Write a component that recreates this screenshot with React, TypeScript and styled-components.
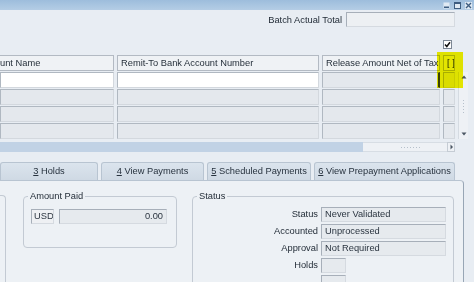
import styled, { createGlobalStyle } from "styled-components";

const GlobalStyle = createGlobalStyle`
  html, body {
    margin: 0;
    padding: 0;
  }
  body {
    width: 474px;
    height: 282px;
    overflow: hidden;
    background: #e8edf3;
    font-family: "Liberation Sans", Arial, sans-serif;
    font-size: 9.3px;
    color: #1e2833;
  }
`;

const Window = styled.div`
  position: relative;
  width: 474px;
  height: 282px;
  overflow: hidden;
  display: flex;
  flex-direction: column;
`;

const TitleBar = styled.div`
  height: 10px;
  flex: 0 0 10px;
  background: linear-gradient(#9dbddc, #b4cde5);
  display: flex;
  justify-content: flex-end;
  align-items: center;
  gap: 4px;
  padding-right: 2px;
`;

const WinButton = styled.svg`
  width: 7px;
  height: 7px;
  display: block;
`;

const BatchRow = styled.div`
  margin-top: 2px;
  height: 15px;
  flex: 0 0 15px;
  display: flex;
  justify-content: flex-end;
  align-items: center;
  gap: 4px;
  padding-right: 19px;
`;

const Field = styled.div<{ $w?: number; $align?: string; $bg?: string }>`
  box-sizing: border-box;
  width: ${(p) => (p.$w ? `${p.$w}px` : "100%")};
  height: 15px;
  line-height: 13px;
  padding: 0 3px;
  border: 1px solid;
  border-color: #a7afb9 #d5dae0 #d5dae0 #a7afb9;
  background: ${(p) => p.$bg || "#e6eaee"};
  text-align: ${(p) => p.$align || "left"};
  white-space: nowrap;
  overflow: hidden;
  color: #2b3540;
`;

const CheckRow = styled.div`
  margin-top: 13px;
  height: 8px;
  flex: 0 0 8px;
  display: flex;
  justify-content: flex-end;
  padding-right: 22px;
`;

const CheckBox = styled.div`
  box-sizing: border-box;
  width: 9px;
  height: 9px;
  border: 1px solid #7c8794;
  background: #fff;
  display: flex;
  align-items: center;
  justify-content: center;
`;

const Table = styled.div`
  margin-top: 7px;
  display: grid;
  grid-template-columns: 114px 202px 118px 12px 10px;
  grid-template-rows: 16px repeat(4, 16px);
  column-gap: 3px;
  row-gap: 1px;
`;

const HeaderCell = styled.div<{ $center?: boolean }>`
  box-sizing: border-box;
  background: #eff2f5;
  border: 1px solid #b3bac3;
  padding: 0 3px;
  line-height: 14px;
  white-space: nowrap;
  overflow: hidden;
  text-align: ${(p) => (p.$center ? "center" : "left")};
  color: #26303b;

  &:first-child {
    border-left: none;
    padding-left: 0;
  }
`;

const Cell = styled.div<{ $white?: boolean; $focus?: boolean }>`
  box-sizing: border-box;
  background: ${(p) => (p.$white ? "#ffffff" : "#e4e8ed")};
  border: 1px solid;
  border-color: #b0b8c1 #d3d8de #d3d8de #b0b8c1;
  ${(p) => (p.$focus ? "border-right: 2px solid #3c434b;" : "")}
`;

const VScroll = styled.div`
  grid-column: 5;
  grid-row: 2 / span 4;
  display: flex;
  flex-direction: column;
  align-items: center;
  justify-content: space-between;
  background: #eef1f5;
  border-left: 1px solid #d5dbe2;
`;

const ScrollArrow = styled.svg`
  width: 6px;
  height: 6px;
  display: block;
  margin: 2px 0;
`;

const Grip = styled.div<{ $vertical?: boolean }>`
  width: ${(p) => (p.$vertical ? "3px" : "20px")};
  height: ${(p) => (p.$vertical ? "14px" : "3px")};
  background-image: radial-gradient(circle, #b6c0cb 0.8px, transparent 1px);
  background-size: 3px 3px;
`;

const HScroll = styled.div`
  margin-top: 3px;
  width: 455px;
  height: 10px;
  flex: 0 0 10px;
  display: flex;
`;

const HTrack = styled.div`
  flex: 0 0 363px;
  background: #c1d2e5;
`;

const HThumb = styled.div`
  flex: 1;
  display: flex;
  align-items: center;
  justify-content: center;
  padding-left: 10px;
  background: #eef1f5;
  border-top: 1px solid #d7dde4;
  border-bottom: 1px solid #d7dde4;
`;

const HArrow = styled.div`
  flex: 0 0 8px;
  display: flex;
  align-items: center;
  justify-content: center;
  background: #eef1f5;
  border: 1px solid #c5ccd4;
  box-sizing: border-box;
`;

const Tabs = styled.div`
  margin-top: 10px;
  height: 18px;
  flex: 0 0 18px;
  display: flex;
  gap: 3px;
`;

const Tab = styled.div<{ $w: number }>`
  box-sizing: border-box;
  width: ${(p) => p.$w}px;
  height: 18px;
  background: linear-gradient(#dbe4ed, #cfd9e4);
  border: 1px solid #b8c4d1;
  border-bottom: none;
  border-radius: 3px 3px 0 0;
  text-align: center;
  line-height: 17px;
  white-space: nowrap;
  color: #27323e;

  u {
    text-decoration: underline;
  }
`;

const Panel = styled.div`
  flex: 1;
  margin-right: 10px;
  border-top: 1px solid #b8c4d1;
  border-right: 1px solid #98a6b5;
  border-top-right-radius: 4px;
  background: #edf1f5;
  display: flex;
  align-items: flex-start;
  padding-top: 10px;
`;

const CutGroup = styled.div`
  margin-top: 4px;
  width: 5px;
  height: 120px;
  border-top: 1px solid #c3cad3;
  border-right: 1px solid #c3cad3;
  border-top-right-radius: 4px;
`;

const Group = styled.fieldset<{ $w: number; $h: number; $ml: number }>`
  box-sizing: border-box;
  margin: 0 0 0 ${(p) => p.$ml}px;
  padding: 0;
  width: ${(p) => p.$w}px;
  height: ${(p) => p.$h}px;
  min-inline-size: 0;
  border: 1px solid #c3cad3;
  border-radius: 4px;
`;

const Legend = styled.legend`
  margin-left: 4px;
  padding: 0 2px;
  line-height: 11px;
  font-size: 9.3px;
  color: #1e2833;
`;

const AmountRow = styled.div`
  margin-top: 7px;
  padding-left: 7px;
  display: flex;
  gap: 5px;
`;

const StatusGrid = styled.div`
  margin-top: 5px;
  padding-right: 7px;
  display: grid;
  grid-template-columns: 1fr 125px;
  grid-auto-rows: 15px;
  column-gap: 3px;
  row-gap: 2px;
  align-items: center;
`;

const StatusLabel = styled.div`
  text-align: right;
  white-space: nowrap;
  line-height: 15px;
`;

const Highlight = styled.div`
  position: absolute;
  left: 437px;
  top: 52px;
  width: 26px;
  height: 36px;
  background: #f4f200;
  mix-blend-mode: multiply;
  pointer-events: none;
`;

const statusRows: { label: string; value: string; w?: number }[] = [
  { label: "Status", value: "Never Validated" },
  { label: "Accounted", value: "Unprocessed" },
  { label: "Approval", value: "Not Required" },
  { label: "Holds", value: "", w: 25 },
  { label: "", value: "", w: 25 },
];

export default function App() {
  return (
    <Window>
      <GlobalStyle />
      <TitleBar>
        <WinButton viewBox="0 0 7 7">
          <rect x="0.5" y="0.5" width="6" height="6" fill="#dfe9f3" />
          <rect x="1" y="4.5" width="5" height="1.5" fill="#3e5d80" />
        </WinButton>
        <WinButton viewBox="0 0 7 7">
          <rect x="0.5" y="0.5" width="6" height="6" fill="#dfe9f3" stroke="#3e5d80" />
          <rect x="0.5" y="0.5" width="6" height="1.5" fill="#3e5d80" />
        </WinButton>
        <WinButton viewBox="0 0 7 7">
          <rect x="0" y="0" width="7" height="7" fill="#dfe9f3" />
          <path d="M1 1 L6 6 M6 1 L1 6" stroke="#3e5d80" strokeWidth="1.4" />
        </WinButton>
      </TitleBar>

      <BatchRow>
        <span>Batch Actual Total</span>
        <Field $w={109} $bg="#edf0f3" />
      </BatchRow>

      <CheckRow>
        <CheckBox>
          <svg width="7" height="7" viewBox="0 0 7 7">
            <path d="M1 3.5 L2.8 5.5 L6 1.2" fill="none" stroke="#111" strokeWidth="1.5" />
          </svg>
        </CheckBox>
      </CheckRow>

      <Table>
        <HeaderCell>unt Name</HeaderCell>
        <HeaderCell>Remit-To Bank Account Number</HeaderCell>
        <HeaderCell>Release Amount Net of Tax</HeaderCell>
        <HeaderCell $center>[ ]</HeaderCell>
        <div />
        {[0, 1, 2, 3].map((r) => [
          <Cell key={`a${r}`} $white={r === 0} />,
          <Cell key={`b${r}`} $white={r === 0} />,
          <Cell key={`c${r}`} $focus={r === 0} />,
          <Cell key={`d${r}`} />,
        ])}
        <VScroll>
          <ScrollArrow viewBox="0 0 6 6">
            <path d="M0.5 4.5 L3 1.5 L5.5 4.5 Z" fill="#4b5663" />
          </ScrollArrow>
          <Grip $vertical />
          <ScrollArrow viewBox="0 0 6 6">
            <path d="M0.5 1.5 L3 4.5 L5.5 1.5 Z" fill="#4b5663" />
          </ScrollArrow>
        </VScroll>
      </Table>

      <HScroll>
        <HTrack />
        <HThumb>
          <Grip />
        </HThumb>
        <HArrow>
          <svg width="5" height="6" viewBox="0 0 5 6">
            <path d="M1.5 0.5 L4 3 L1.5 5.5 Z" fill="#4b5663" />
          </svg>
        </HArrow>
      </HScroll>

      <Tabs>
        <Tab $w={98}>
          <u>3</u> Holds
        </Tab>
        <Tab $w={103}>
          <u>4</u> View Payments
        </Tab>
        <Tab $w={104}>
          <u>5</u> Scheduled Payments
        </Tab>
        <Tab $w={141}>
          <u>6</u> View Prepayment Applications
        </Tab>
      </Tabs>

      <Panel>
        <CutGroup />
        <Group $w={154} $h={57} $ml={17}>
          <Legend>Amount Paid</Legend>
          <AmountRow>
            <Field $w={23} $bg="#eef0f3" style={{ padding: "0 2px" }}>
              USD
            </Field>
            <Field $w={108} $align="right">
              0.00
            </Field>
          </AmountRow>
        </Group>
        <Group $w={262} $h={140} $ml={15}>
          <Legend>Status</Legend>
          <StatusGrid>
            {statusRows.map((row, i) => [
              <StatusLabel key={`l${i}`}>{row.label}</StatusLabel>,
              <Field key={`f${i}`} $w={row.w}>
                {row.value}
              </Field>,
            ])}
          </StatusGrid>
        </Group>
      </Panel>

      <Highlight />
    </Window>
  );
}
